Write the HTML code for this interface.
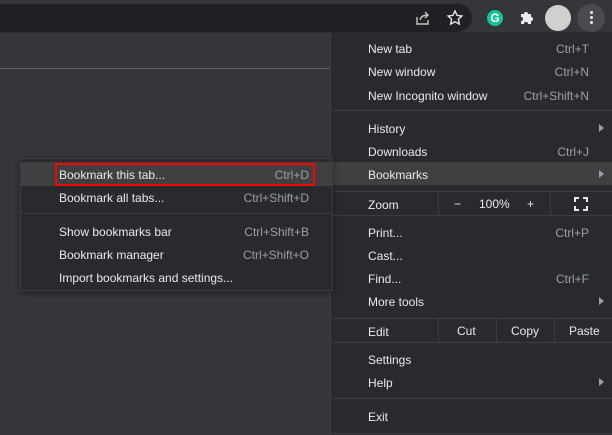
<!DOCTYPE html>
<html><head><meta charset="utf-8"><style>
*{margin:0;padding:0;box-sizing:border-box}
body{width:612px;height:435px;overflow:hidden;background:#35363a;position:relative;font-family:"Liberation Sans",sans-serif;font-size:12px;color:#e8eaed}
.a{position:absolute}
.t{position:absolute;white-space:nowrap;line-height:14px;margin-top:1px}
.s{position:absolute;white-space:nowrap;line-height:14px;color:#9aa0a6;text-align:right;margin-top:1px}
.sep{position:absolute;height:1px;background:#3c3d40}
.arr{position:absolute;width:0;height:0;border-left:5px solid #9aa0a6;border-top:4px solid transparent;border-bottom:4px solid transparent}
</style></head><body>
<div class="a" style="left:0;top:4px;width:472px;height:28px;background:#202124;border-radius:0 14px 14px 0"></div>
<div class="a" style="left:0;top:32px;width:612px;height:1px;background:#2b2c2f"></div>
<div class="a" style="left:0;top:68px;width:330px;height:1px;background:#5f6368"></div>
<svg class="a" style="left:414px;top:9px" width="18" height="18" viewBox="0 0 18 18" fill="none" stroke="#c4c7c5" stroke-width="1.4"><path d="M3 8v7h11v-4"/><path d="M6 11c1-4 4-5 8-5M11 3l3 3-3 3"/></svg>
<svg class="a" style="left:446px;top:9px" width="18" height="18" viewBox="0 0 18 18" fill="none" stroke="#e8eaed" stroke-width="1.4"><path d="M9 2l2.1 4.4 4.8.6-3.5 3.3.9 4.8L9 12.8 4.7 15.1l.9-4.8L2.1 7l4.8-.6z"/></svg>
<div class="a" style="left:487px;top:10px;width:16px;height:16px;border-radius:50%;background:#15c39a;color:#fff;font-weight:bold;font-size:12px;text-align:center;line-height:16px">G</div>
<svg class="a" style="left:518px;top:9px" width="17" height="17" viewBox="0 0 17 17" fill="#e8eaed"><path d="M3 5h3a2 2 0 1 1 4 0h3v3a2 2 0 1 1 0 4v3h-3a2 2 0 1 0-4 0H3v-3a2 2 0 1 0 0-4z"/></svg>
<div class="a" style="left:545px;top:5px;width:26px;height:26px;border-radius:50%;background:#d0d0d0"></div>
<div class="a" style="left:577px;top:4px;width:28px;height:28px;border-radius:50%;background:#4a4b4e"></div>
<div class="a" style="left:590px;top:11px;width:3px;height:3px;border-radius:50%;background:#e8eaed;box-shadow:0 5px 0 #e8eaed,0 10px 0 #e8eaed"></div>

<div class="a" style="left:330px;top:33px;width:282px;height:402px;background:#292a2d;border-left:1px solid #3c3d40"></div>
<div class="t" style="left:368px;top:41px">New tab</div><div class="s" style="right:23px;top:41px">Ctrl+T</div>
<div class="t" style="left:368px;top:64px">New window</div><div class="s" style="right:23px;top:64px">Ctrl+N</div>
<div class="t" style="left:368px;top:88px">New Incognito window</div><div class="s" style="right:23px;top:88px">Ctrl+Shift+N</div>
<div class="sep" style="left:331px;top:110px;width:281px"></div>
<div class="t" style="left:368px;top:121px">History</div><div class="arr" style="left:599px;top:124px"></div>
<div class="t" style="left:368px;top:144px">Downloads</div><div class="s" style="right:23px;top:144px">Ctrl+J</div>
<div class="a" style="left:331px;top:162px;width:281px;height:23px;background:#3f4042"></div>
<div class="t" style="left:368px;top:167px">Bookmarks</div><div class="arr" style="left:599px;top:170px"></div>
<div class="sep" style="left:331px;top:191px;width:281px"></div>
<div class="sep" style="left:331px;top:215px;width:281px"></div>
<div class="a" style="left:438px;top:192px;width:1px;height:23px;background:#3c3d40"></div>
<div class="a" style="left:550px;top:192px;width:1px;height:23px;background:#3c3d40"></div>
<div class="t" style="left:368px;top:197px">Zoom</div>
<div class="t" style="left:454px;top:196px">−</div>
<div class="t" style="left:479px;top:196px">100%</div>
<div class="t" style="left:527px;top:196px">+</div>
<svg class="a" style="left:574px;top:197px" width="14" height="14" viewBox="0 0 14 14" fill="none" stroke="#e8eaed" stroke-width="2"><path d="M1 5V1h4M9 1h4v4M13 9v4H9M5 13H1V9"/></svg>
<div class="t" style="left:368px;top:225px">Print...</div><div class="s" style="right:23px;top:225px">Ctrl+P</div>
<div class="t" style="left:368px;top:248px">Cast...</div>
<div class="t" style="left:368px;top:271px">Find...</div><div class="s" style="right:23px;top:271px">Ctrl+F</div>
<div class="t" style="left:368px;top:294px">More tools</div><div class="arr" style="left:599px;top:297px"></div>
<div class="sep" style="left:331px;top:318px;width:281px"></div>
<div class="sep" style="left:331px;top:342px;width:281px"></div>
<div class="a" style="left:438px;top:318px;width:1px;height:24px;background:#3c3d40"></div>
<div class="a" style="left:496px;top:318px;width:1px;height:24px;background:#3c3d40"></div>
<div class="a" style="left:554px;top:318px;width:1px;height:24px;background:#3c3d40"></div>
<div class="t" style="left:368px;top:324px">Edit</div>
<div class="t" style="left:457px;top:323px">Cut</div>
<div class="t" style="left:511px;top:323px">Copy</div>
<div class="t" style="left:569px;top:323px">Paste</div>
<div class="t" style="left:368px;top:352px">Settings</div>
<div class="t" style="left:368px;top:375px">Help</div><div class="arr" style="left:599px;top:378px"></div>
<div class="sep" style="left:331px;top:398px;width:281px"></div>
<div class="t" style="left:368px;top:409px">Exit</div>
<div class="sep" style="left:331px;top:433px;width:281px"></div>

<div class="a" style="left:20px;top:158px;width:313px;height:133px;background:#292a2d;border:1px solid #3c3d40;box-shadow:0 2px 6px rgba(0,0,0,.4)"></div>
<div class="a" style="left:21px;top:162px;width:311px;height:24px;background:#3f4042"></div>
<div class="a" style="left:55px;top:163px;width:260px;height:23px;border:2px solid #ff0000"></div>
<div class="t" style="left:59px;top:167px">Bookmark this tab...</div><div class="s" style="right:303px;top:167px">Ctrl+D</div>
<div class="t" style="left:59px;top:190px">Bookmark all tabs...</div><div class="s" style="right:303px;top:190px">Ctrl+Shift+D</div>
<div class="sep" style="left:21px;top:213px;width:311px"></div>
<div class="t" style="left:59px;top:224px">Show bookmarks bar</div><div class="s" style="right:303px;top:224px">Ctrl+Shift+B</div>
<div class="t" style="left:59px;top:247px">Bookmark manager</div><div class="s" style="right:303px;top:247px">Ctrl+Shift+O</div>
<div class="t" style="left:59px;top:270px">Import bookmarks and settings...</div>
</body></html>
